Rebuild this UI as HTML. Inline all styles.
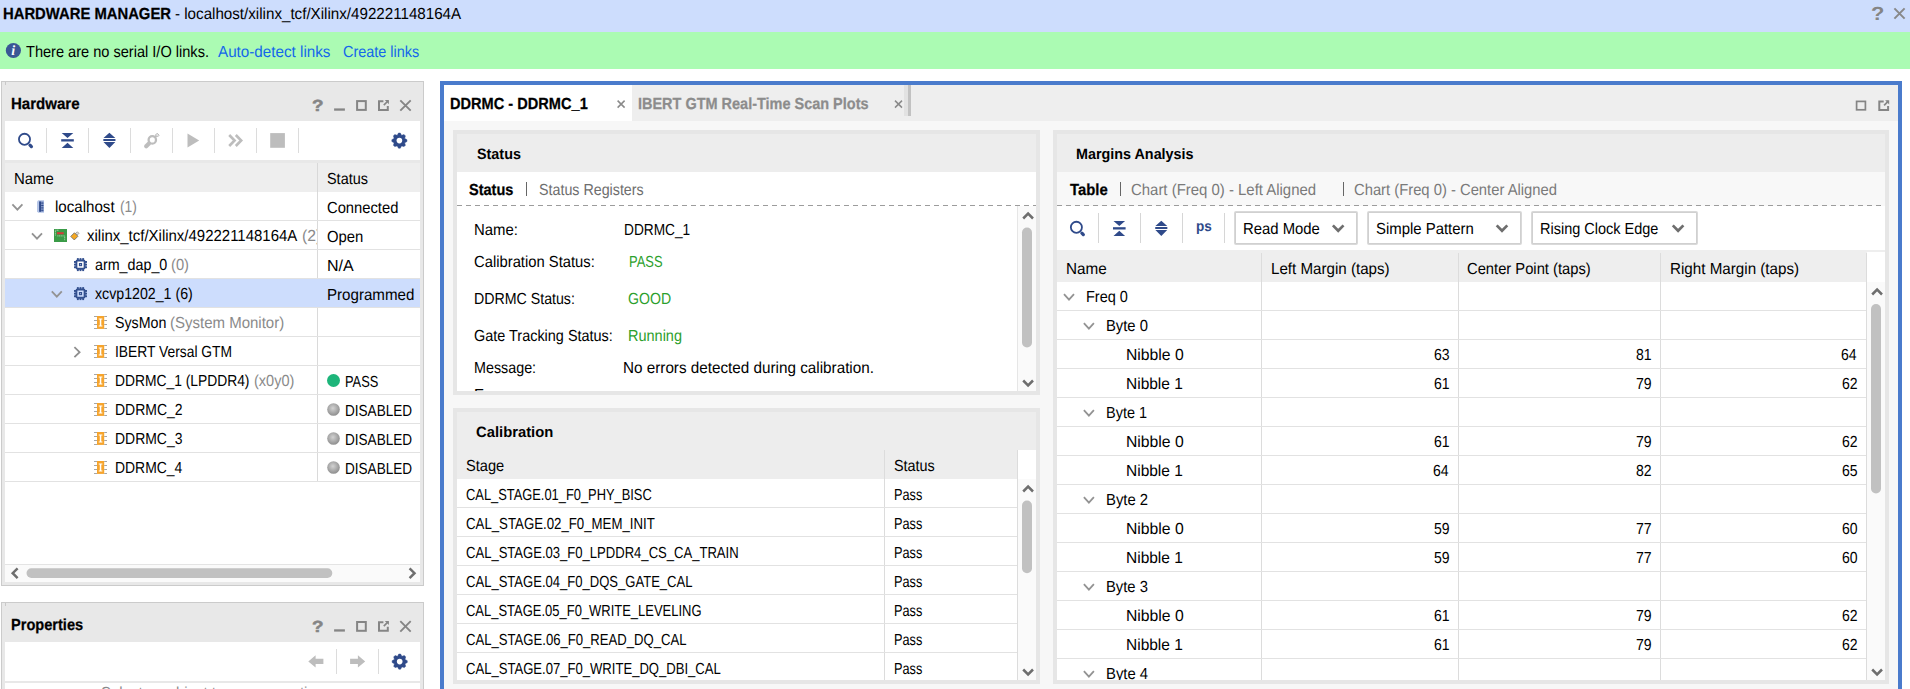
<!DOCTYPE html>
<html lang="en"><head><meta charset="utf-8"><title>Hardware Manager</title>
<style>
html,body{margin:0;padding:0;background:#fff;overflow:hidden}
#app{position:relative;width:1910px;height:689px;overflow:hidden;background:#fff;font-family:"Liberation Sans",sans-serif}
#app div{position:absolute}
#app span{position:absolute;white-space:pre;line-height:1;transform-origin:0 0;text-rendering:geometricPrecision}
#app svg{position:absolute;left:0;top:0}
</style></head><body><div id="app">
<div style="left:0px;top:0px;width:1910px;height:32px;background:#cdddfd;"></div>
<div style="left:0px;top:32px;width:1910px;height:37px;background:#abfbb3;"></div>
<div style="left:1px;top:81px;width:423px;height:505px;background:#cbcbcb;"></div>
<div style="left:2px;top:82px;width:421px;height:503px;background:#e8e8e8;"></div>
<div style="left:5px;top:121px;width:415px;height:39px;background:#fff;"></div>
<div style="left:5px;top:82px;width:1px;height:3px;background:#c9c9c9;"></div>
<div style="left:46px;top:128px;width:1px;height:25px;background:#dcdcdc;"></div>
<div style="left:88px;top:128px;width:1px;height:25px;background:#dcdcdc;"></div>
<div style="left:130px;top:128px;width:1px;height:25px;background:#dcdcdc;"></div>
<div style="left:172px;top:128px;width:1px;height:25px;background:#dcdcdc;"></div>
<div style="left:214px;top:128px;width:1px;height:25px;background:#dcdcdc;"></div>
<div style="left:256px;top:128px;width:1px;height:25px;background:#dcdcdc;"></div>
<div style="left:298px;top:128px;width:1px;height:25px;background:#dcdcdc;"></div>
<div style="left:5px;top:163px;width:415px;height:29px;background:#eeeeee;"></div>
<div style="left:5px;top:192px;width:415px;height:372px;background:#fff;"></div>
<div style="left:317px;top:163px;width:1px;height:319px;background:#dadada;"></div>
<div style="left:5px;top:279px;width:415px;height:29px;background:#cdddfd;"></div>
<div style="left:5px;top:220px;width:415px;height:1px;background:#e2e2e2;"></div>
<div style="left:5px;top:249px;width:415px;height:1px;background:#e2e2e2;"></div>
<div style="left:5px;top:278px;width:415px;height:1px;background:#e2e2e2;"></div>
<div style="left:5px;top:307px;width:415px;height:1px;background:#e2e2e2;"></div>
<div style="left:5px;top:336px;width:415px;height:1px;background:#e2e2e2;"></div>
<div style="left:5px;top:365px;width:415px;height:1px;background:#e2e2e2;"></div>
<div style="left:5px;top:394px;width:415px;height:1px;background:#e2e2e2;"></div>
<div style="left:5px;top:423px;width:415px;height:1px;background:#e2e2e2;"></div>
<div style="left:5px;top:452px;width:415px;height:1px;background:#e2e2e2;"></div>
<div style="left:5px;top:481px;width:415px;height:1px;background:#e2e2e2;"></div>
<div style="left:317px;top:163px;width:1px;height:29px;background:#d8d8d8;"></div>
<div style="left:318px;top:221px;width:102px;height:28px;background:#fff;"></div>
<div style="left:5px;top:564px;width:415px;height:18px;background:#fafafa;"></div>
<div style="left:5px;top:564px;width:415px;height:1px;background:#e4e4e4;"></div>
<div style="left:1px;top:602px;width:423px;height:90px;background:#cbcbcb;"></div>
<div style="left:2px;top:603px;width:421px;height:90px;background:#e8e8e8;"></div>
<div style="left:5px;top:642px;width:415px;height:39px;background:#fff;"></div>
<div style="left:5px;top:683px;width:415px;height:10px;background:#fff;"></div>
<div style="left:5px;top:603px;width:1px;height:3px;background:#c9c9c9;"></div>
<div style="left:336px;top:649px;width:1px;height:25px;background:#dcdcdc;"></div>
<div style="left:378px;top:649px;width:1px;height:25px;background:#dcdcdc;"></div>
<div style="left:440px;top:81px;width:1462px;height:620px;background:#4a7bcc;"></div>
<div style="left:444px;top:85px;width:1454px;height:620px;background:#f7f7f7;"></div>
<div style="left:444px;top:85px;width:1454px;height:36px;background:#eeeeee;"></div>
<div style="left:444px;top:85px;width:188px;height:36px;background:#fff;"></div>
<div style="left:904px;top:85px;width:4px;height:31px;background:#e2e2e2;"></div>
<div style="left:908px;top:85px;width:3px;height:31px;background:#c2c2c2;"></div>
<div style="left:453px;top:130px;width:587px;height:265px;background:#e6e6e6;"></div>
<div style="left:457px;top:134px;width:579px;height:257px;background:#ededed;"></div>
<div style="left:457px;top:172px;width:579px;height:219px;background:#fff;"></div>
<div style="left:526px;top:182px;width:1px;height:14px;background:#666;"></div>
<div style="left:457px;top:391px;width:579px;height:4px;background:#e6e6e6;"></div>
<div style="left:444px;top:395px;width:600px;height:13px;background:#f7f7f7;"></div>
<div style="left:1017px;top:206px;width:1px;height:185px;background:#e6e6e6;"></div>
<div style="left:1018px;top:206px;width:18px;height:185px;background:#fafafa;"></div>
<div style="left:453px;top:408px;width:587px;height:276px;background:#e6e6e6;"></div>
<div style="left:457px;top:412px;width:579px;height:268px;background:#ededed;"></div>
<div style="left:457px;top:479px;width:561px;height:201px;background:#fff;"></div>
<div style="left:1018px;top:450px;width:18px;height:230px;background:#fff;"></div>
<div style="left:884px;top:450px;width:1px;height:230px;background:#dcdcdc;"></div>
<div style="left:1017px;top:450px;width:1px;height:230px;background:#dcdcdc;"></div>
<div style="left:457px;top:507px;width:560px;height:1px;background:#e2e2e2;"></div>
<div style="left:457px;top:536px;width:560px;height:1px;background:#e2e2e2;"></div>
<div style="left:457px;top:565px;width:560px;height:1px;background:#e2e2e2;"></div>
<div style="left:457px;top:594px;width:560px;height:1px;background:#e2e2e2;"></div>
<div style="left:457px;top:623px;width:560px;height:1px;background:#e2e2e2;"></div>
<div style="left:457px;top:652px;width:560px;height:1px;background:#e2e2e2;"></div>
<div style="left:1018px;top:479px;width:18px;height:201px;background:#fafafa;"></div>
<div style="left:1053px;top:130px;width:836px;height:554px;background:#e6e6e6;"></div>
<div style="left:1057px;top:134px;width:828px;height:546px;background:#ededed;"></div>
<div style="left:1057px;top:172px;width:828px;height:34px;background:#f8f8f8;"></div>
<div style="left:1057px;top:206px;width:828px;height:44px;background:#fff;"></div>
<div style="left:1057px;top:250px;width:828px;height:32px;background:#eeeeee;"></div>
<div style="left:1057px;top:282px;width:828px;height:398px;background:#fff;"></div>
<div style="left:1867px;top:252px;width:18px;height:30px;background:#fff;"></div>
<div style="left:1120px;top:182px;width:1px;height:14px;background:#666;"></div>
<div style="left:1343px;top:182px;width:1px;height:14px;background:#666;"></div>
<div style="left:1098px;top:213px;width:1px;height:30px;background:#d6d6d6;"></div>
<div style="left:1140px;top:213px;width:1px;height:30px;background:#d6d6d6;"></div>
<div style="left:1182px;top:213px;width:1px;height:30px;background:#d6d6d6;"></div>
<div style="left:1224px;top:213px;width:1px;height:30px;background:#d6d6d6;"></div>
<div style="left:1234px;top:211px;width:124px;height:34px;background:#d9d9d9;border-radius:2px"></div>
<div style="left:1235px;top:212px;width:122px;height:32px;background:#d0d0d0;border-radius:1px"></div>
<div style="left:1236px;top:213px;width:120px;height:30px;background:#fff;"></div>
<div style="left:1367px;top:211px;width:155px;height:34px;background:#d9d9d9;border-radius:2px"></div>
<div style="left:1368px;top:212px;width:153px;height:32px;background:#d0d0d0;border-radius:1px"></div>
<div style="left:1369px;top:213px;width:151px;height:30px;background:#fff;"></div>
<div style="left:1531px;top:211px;width:167px;height:34px;background:#d9d9d9;border-radius:2px"></div>
<div style="left:1532px;top:212px;width:165px;height:32px;background:#d0d0d0;border-radius:1px"></div>
<div style="left:1533px;top:213px;width:163px;height:30px;background:#fff;"></div>
<div style="left:1261px;top:253px;width:1px;height:427px;background:#dcdcdc;"></div>
<div style="left:1458px;top:253px;width:1px;height:427px;background:#dcdcdc;"></div>
<div style="left:1660px;top:253px;width:1px;height:427px;background:#dcdcdc;"></div>
<div style="left:1866px;top:253px;width:1px;height:427px;background:#dcdcdc;"></div>
<div style="left:1057px;top:310px;width:809px;height:1px;background:#e2e2e2;"></div>
<div style="left:1057px;top:339px;width:809px;height:1px;background:#e2e2e2;"></div>
<div style="left:1057px;top:368px;width:809px;height:1px;background:#e2e2e2;"></div>
<div style="left:1057px;top:397px;width:809px;height:1px;background:#e2e2e2;"></div>
<div style="left:1057px;top:426px;width:809px;height:1px;background:#e2e2e2;"></div>
<div style="left:1057px;top:455px;width:809px;height:1px;background:#e2e2e2;"></div>
<div style="left:1057px;top:484px;width:809px;height:1px;background:#e2e2e2;"></div>
<div style="left:1057px;top:513px;width:809px;height:1px;background:#e2e2e2;"></div>
<div style="left:1057px;top:542px;width:809px;height:1px;background:#e2e2e2;"></div>
<div style="left:1057px;top:571px;width:809px;height:1px;background:#e2e2e2;"></div>
<div style="left:1057px;top:600px;width:809px;height:1px;background:#e2e2e2;"></div>
<div style="left:1057px;top:629px;width:809px;height:1px;background:#e2e2e2;"></div>
<div style="left:1057px;top:658px;width:809px;height:1px;background:#e2e2e2;"></div>
<div style="left:1057px;top:680px;width:828px;height:4px;background:#e6e6e6;"></div>
<div style="left:444px;top:684px;width:1454px;height:10px;background:#f7f7f7;"></div>
<div style="left:1867px;top:282px;width:18px;height:398px;background:#fafafa;"></div>
<svg width="1910" height="689" viewBox="0 0 1910 689"><circle cx="13.4" cy="50.5" r="7.6" fill="#3a5795"/>
<path d="M1894.4 8.4 L1904.6 18.6 M1904.6 8.4 L1894.4 18.6" stroke="#888888" stroke-width="2" fill="none"/>
<rect x="334.1" y="108.39999999999999" width="10.8" height="2.3" fill="#858585"/>
<rect x="357.1" y="101.1" width="8.7" height="8.8" fill="none" stroke="#858585" stroke-width="2"/>
<path d="M383.4 101.3 H379 V109.89999999999999 H387.8 V105.89999999999999" fill="none" stroke="#858585" stroke-width="2"/>
<path d="M383.8 105.2 L388 101.0" stroke="#858585" stroke-width="1.7" fill="none"/><path d="M384.8 100.1 H388.9 V104.2 Z" fill="#858585"/>
<path d="M400.3 100.3 L410.7 110.7 M410.7 100.3 L400.3 110.7" stroke="#858585" stroke-width="1.9" fill="none"/>
<circle cx="24.5" cy="139.3" r="5.55" fill="none" stroke="#2f4a8a" stroke-width="1.8"/><path d="M30.0 145.20000000000002 L31.4 146.60000000000002" stroke="#2f4a8a" stroke-width="3.3" stroke-linecap="round"/>
<path d="M61.7 133.0 H73.3 L67.5 138.1 Z M61.7 147.9 H73.3 L67.5 142.70000000000002 Z" fill="#2f4a8a"/><rect x="61.2" y="139.20000000000002" width="12.6" height="2.3" fill="#2f4a8a"/>
<path d="M103.5 138.0 H115.30000000000001 L109.4 132.85 Z M103.5 142.0 H115.30000000000001 L109.4 148.0 Z" fill="#2f4a8a"/><rect x="103.30000000000001" y="139.0" width="12.2" height="2" rx="0.5" fill="#2f4a8a"/>
<g fill="none" stroke="#bdbdbd"><circle cx="152.3" cy="139.9" r="3.7" stroke-width="2.3"/><path d="M146.2 146.2 L149 143.4" stroke-width="4.2" stroke-linecap="round"/><path d="M155 137.2 L156.6 135.6" stroke-width="2"/><path d="M157.2 133.2 L159.2 135.2 L157.4 137 L155.4 135 Z" stroke-width="1" fill="#e2e2e2"/></g>
<path d="M187.5 133.5 L199.2 140.5 L187.5 147.5 Z" fill="#bdbdbd"/>
<path d="M229.2 135 L234.6 140.5 L229.2 146 M235.8 135 L241.2 140.5 L235.8 146" fill="none" stroke="#bdbdbd" stroke-width="2.6"/>
<rect x="270.2" y="133.1" width="14.7" height="14.7" fill="#bdbdbd"/>
<path d="M397.31 135.21 L398.49 133.05 L400.31 133.05 L401.49 135.21 L401.73 135.32 L404.09 134.62 L405.38 135.91 L404.68 138.27 L404.79 138.51 L406.95 139.69 L406.95 141.51 L404.79 142.69 L404.68 142.93 L405.38 145.29 L404.09 146.58 L401.73 145.88 L401.49 145.99 L400.31 148.15 L398.49 148.15 L397.31 145.99 L397.07 145.88 L394.71 146.58 L393.42 145.29 L394.12 142.93 L394.01 142.69 L391.85 141.51 L391.85 139.69 L394.01 138.51 L394.12 138.27 L393.42 135.91 L394.71 134.62 L397.07 135.32Z" fill="#2f4a8a" stroke="#2f4a8a" stroke-width="0.5" stroke-linejoin="round"/><circle cx="399.4" cy="140.6" r="2.81" fill="#fff"/>
<path d="M12.4 204.3 L17.4 209.70000000000002 L22.4 204.3" fill="none" stroke="#939393" stroke-width="1.8"/>
<path d="M38.2 200.3 H44 V212.8 H38.2 L37 211.6 V201.5 Z" fill="#b5c5e7"/><rect x="39.1" y="201.4" width="2.1" height="10.4" fill="#2f4a8a"/><rect x="41.2" y="201.4" width="2.3" height="10.4" fill="#7c91c2"/><rect x="41.2" y="202.6" width="2.2" height="1" fill="#2f4a8a"/><rect x="41.2" y="205" width="2.2" height="1" fill="#2f4a8a"/><rect x="41.2" y="207.4" width="2.2" height="1" fill="#2f4a8a"/><rect x="41.2" y="209.8" width="2.2" height="1" fill="#2f4a8a"/>
<path d="M32 233.3 L37.0 238.70000000000002 L42 233.3" fill="none" stroke="#939393" stroke-width="1.8"/>
<rect x="54" y="229" width="13" height="13" fill="#3a9b47"/><rect x="56.9" y="232.2" width="6.8" height="2.1" fill="#d63a3a"/><path d="M55.4 235.6 V230.2 H59 M57.3 235.9 H64.7 V240.6" stroke="#a5d6aa" stroke-width="0.9" fill="none" stroke-dasharray="1.2 0.5"/>
<g transform="rotate(45 74.5 236.2)"><rect x="73.4" y="231" width="2.2" height="3" fill="#dcdcdc" stroke="#7a7a7a" stroke-width="0.6"/><rect x="72" y="233.8" width="5" height="5.2" fill="#f6a821" stroke="#6b6b6b" stroke-width="0.8"/></g>
<rect x="76.4" y="260.5" width="8.2" height="8.2" rx="1.2" fill="none" stroke="#33508f" stroke-width="1.9"/><rect x="78.9" y="263.0" width="3.2" height="3.2" fill="#33508f"/><rect x="80" y="264.1" width="1" height="1" fill="#9fb0d6"/><rect x="76.9" y="258.1" width="1.9" height="2" fill="#33508f"/><rect x="76.9" y="269.1" width="1.9" height="2" fill="#33508f"/><rect x="74" y="261.0" width="2" height="1.9" fill="#33508f"/><rect x="85" y="261.0" width="2" height="1.9" fill="#33508f"/><rect x="79.55" y="258.1" width="1.9" height="2" fill="#33508f"/><rect x="79.55" y="269.1" width="1.9" height="2" fill="#33508f"/><rect x="74" y="263.65000000000003" width="2" height="1.9" fill="#33508f"/><rect x="85" y="263.65000000000003" width="2" height="1.9" fill="#33508f"/><rect x="82.2" y="258.1" width="1.9" height="2" fill="#33508f"/><rect x="82.2" y="269.1" width="1.9" height="2" fill="#33508f"/><rect x="74" y="266.3" width="2" height="1.9" fill="#33508f"/><rect x="85" y="266.3" width="2" height="1.9" fill="#33508f"/>
<path d="M51.8 291.3 L56.8 296.7 L61.8 291.3" fill="none" stroke="#939393" stroke-width="1.8"/>
<rect x="76.4" y="289.5" width="8.2" height="8.2" rx="1.2" fill="none" stroke="#33508f" stroke-width="1.9"/><rect x="78.9" y="292.0" width="3.2" height="3.2" fill="#33508f"/><rect x="80" y="293.1" width="1" height="1" fill="#9fb0d6"/><rect x="76.9" y="287.1" width="1.9" height="2" fill="#33508f"/><rect x="76.9" y="298.1" width="1.9" height="2" fill="#33508f"/><rect x="74" y="290.0" width="2" height="1.9" fill="#33508f"/><rect x="85" y="290.0" width="2" height="1.9" fill="#33508f"/><rect x="79.55" y="287.1" width="1.9" height="2" fill="#33508f"/><rect x="79.55" y="298.1" width="1.9" height="2" fill="#33508f"/><rect x="74" y="292.65000000000003" width="2" height="1.9" fill="#33508f"/><rect x="85" y="292.65000000000003" width="2" height="1.9" fill="#33508f"/><rect x="82.2" y="287.1" width="1.9" height="2" fill="#33508f"/><rect x="82.2" y="298.1" width="1.9" height="2" fill="#33508f"/><rect x="74" y="295.3" width="2" height="1.9" fill="#33508f"/><rect x="85" y="295.3" width="2" height="1.9" fill="#33508f"/>
<rect x="97" y="316" width="7.2" height="12.9" fill="#f6a42c"/><rect x="94" y="316.1" width="3" height="0.9" fill="#9c9c9c"/><rect x="104.2" y="316.1" width="2.8" height="0.9" fill="#9c9c9c"/><rect x="94" y="320.0" width="3" height="0.9" fill="#9c9c9c"/><rect x="104.2" y="320.0" width="2.8" height="0.9" fill="#9c9c9c"/><rect x="94" y="324.0" width="3" height="0.9" fill="#9c9c9c"/><rect x="104.2" y="324.0" width="2.8" height="0.9" fill="#9c9c9c"/><rect x="94" y="328.0" width="3" height="0.9" fill="#9c9c9c"/><rect x="104.2" y="328.0" width="2.8" height="0.9" fill="#9c9c9c"/><path d="M98.7 318.4 H102.4 V319.5 H101.3 V325.4 H102.4 V326.5 H98.7 V325.4 H99.8 V319.5 H98.7 Z" fill="#fff"/>
<path d="M74.4 347.2 L79.60000000000001 352.2 L74.4 357.2" fill="none" stroke="#8e8e8e" stroke-width="1.8"/>
<rect x="97" y="345" width="7.2" height="12.9" fill="#f6a42c"/><rect x="94" y="345.1" width="3" height="0.9" fill="#9c9c9c"/><rect x="104.2" y="345.1" width="2.8" height="0.9" fill="#9c9c9c"/><rect x="94" y="349.0" width="3" height="0.9" fill="#9c9c9c"/><rect x="104.2" y="349.0" width="2.8" height="0.9" fill="#9c9c9c"/><rect x="94" y="353.0" width="3" height="0.9" fill="#9c9c9c"/><rect x="104.2" y="353.0" width="2.8" height="0.9" fill="#9c9c9c"/><rect x="94" y="357.0" width="3" height="0.9" fill="#9c9c9c"/><rect x="104.2" y="357.0" width="2.8" height="0.9" fill="#9c9c9c"/><path d="M98.7 347.4 H102.4 V348.5 H101.3 V354.4 H102.4 V355.5 H98.7 V354.4 H99.8 V348.5 H98.7 Z" fill="#fff"/>
<rect x="97" y="374" width="7.2" height="12.9" fill="#f6a42c"/><rect x="94" y="374.1" width="3" height="0.9" fill="#9c9c9c"/><rect x="104.2" y="374.1" width="2.8" height="0.9" fill="#9c9c9c"/><rect x="94" y="378.0" width="3" height="0.9" fill="#9c9c9c"/><rect x="104.2" y="378.0" width="2.8" height="0.9" fill="#9c9c9c"/><rect x="94" y="382.0" width="3" height="0.9" fill="#9c9c9c"/><rect x="104.2" y="382.0" width="2.8" height="0.9" fill="#9c9c9c"/><rect x="94" y="386.0" width="3" height="0.9" fill="#9c9c9c"/><rect x="104.2" y="386.0" width="2.8" height="0.9" fill="#9c9c9c"/><path d="M98.7 376.4 H102.4 V377.5 H101.3 V383.4 H102.4 V384.5 H98.7 V383.4 H99.8 V377.5 H98.7 Z" fill="#fff"/>
<rect x="97" y="403" width="7.2" height="12.9" fill="#f6a42c"/><rect x="94" y="403.1" width="3" height="0.9" fill="#9c9c9c"/><rect x="104.2" y="403.1" width="2.8" height="0.9" fill="#9c9c9c"/><rect x="94" y="407.0" width="3" height="0.9" fill="#9c9c9c"/><rect x="104.2" y="407.0" width="2.8" height="0.9" fill="#9c9c9c"/><rect x="94" y="411.0" width="3" height="0.9" fill="#9c9c9c"/><rect x="104.2" y="411.0" width="2.8" height="0.9" fill="#9c9c9c"/><rect x="94" y="415.0" width="3" height="0.9" fill="#9c9c9c"/><rect x="104.2" y="415.0" width="2.8" height="0.9" fill="#9c9c9c"/><path d="M98.7 405.4 H102.4 V406.5 H101.3 V412.4 H102.4 V413.5 H98.7 V412.4 H99.8 V406.5 H98.7 Z" fill="#fff"/>
<rect x="97" y="432" width="7.2" height="12.9" fill="#f6a42c"/><rect x="94" y="432.1" width="3" height="0.9" fill="#9c9c9c"/><rect x="104.2" y="432.1" width="2.8" height="0.9" fill="#9c9c9c"/><rect x="94" y="436.0" width="3" height="0.9" fill="#9c9c9c"/><rect x="104.2" y="436.0" width="2.8" height="0.9" fill="#9c9c9c"/><rect x="94" y="440.0" width="3" height="0.9" fill="#9c9c9c"/><rect x="104.2" y="440.0" width="2.8" height="0.9" fill="#9c9c9c"/><rect x="94" y="444.0" width="3" height="0.9" fill="#9c9c9c"/><rect x="104.2" y="444.0" width="2.8" height="0.9" fill="#9c9c9c"/><path d="M98.7 434.4 H102.4 V435.5 H101.3 V441.4 H102.4 V442.5 H98.7 V441.4 H99.8 V435.5 H98.7 Z" fill="#fff"/>
<rect x="97" y="461" width="7.2" height="12.9" fill="#f6a42c"/><rect x="94" y="461.1" width="3" height="0.9" fill="#9c9c9c"/><rect x="104.2" y="461.1" width="2.8" height="0.9" fill="#9c9c9c"/><rect x="94" y="465.0" width="3" height="0.9" fill="#9c9c9c"/><rect x="104.2" y="465.0" width="2.8" height="0.9" fill="#9c9c9c"/><rect x="94" y="469.0" width="3" height="0.9" fill="#9c9c9c"/><rect x="104.2" y="469.0" width="2.8" height="0.9" fill="#9c9c9c"/><rect x="94" y="473.0" width="3" height="0.9" fill="#9c9c9c"/><rect x="104.2" y="473.0" width="2.8" height="0.9" fill="#9c9c9c"/><path d="M98.7 463.4 H102.4 V464.5 H101.3 V470.4 H102.4 V471.5 H98.7 V470.4 H99.8 V464.5 H98.7 Z" fill="#fff"/>
<circle cx="333.5" cy="380.5" r="6.5" fill="#1db57a"/>
<defs><radialGradient id="gg" cx="45%" cy="40%" r="60%"><stop offset="0" stop-color="#d2d2d2"/><stop offset="1" stop-color="#8e8e8e"/></radialGradient></defs>
<circle cx="333.5" cy="409.5" r="6.3" fill="url(#gg)"/>
<circle cx="333.5" cy="438.5" r="6.3" fill="url(#gg)"/>
<circle cx="333.5" cy="467.5" r="6.3" fill="url(#gg)"/>
<rect x="26.5" y="568.2" width="305.8" height="9.8" rx="4.9" fill="#c1c1c1"/>
<path d="M17.6 568.3 L12.7 573.2 L17.6 578.1" fill="none" stroke="#6e6e6e" stroke-width="2.5"/><path d="M409.6 568.3 L414.5 573.2 L409.6 578.1" fill="none" stroke="#6e6e6e" stroke-width="2.5"/>
<rect x="334.1" y="629.3000000000001" width="10.8" height="2.3" fill="#858585"/>
<rect x="357.1" y="622.0" width="8.7" height="8.8" fill="none" stroke="#858585" stroke-width="2"/>
<path d="M383.4 622.2 H379 V630.8000000000001 H387.8 V626.8000000000001" fill="none" stroke="#858585" stroke-width="2"/>
<path d="M383.8 626.1 L388 621.9000000000001" stroke="#858585" stroke-width="1.7" fill="none"/><path d="M384.8 621.0 H388.9 V625.1 Z" fill="#858585"/>
<path d="M400.3 621.2 L410.7 631.6 M410.7 621.2 L400.3 631.6" stroke="#858585" stroke-width="1.9" fill="none"/>
<path d="M308.3 661.4 L315.6 655.2 V658.7 H323.4 V664.1 H315.6 V667.6 Z" fill="#bdbdbd"/>
<path d="M365.2 661.4 L357.9 655.2 V658.7 H350.1 V664.1 H357.9 V667.6 Z" fill="#bdbdbd"/>
<path d="M397.61 656.21 L398.79 654.05 L400.61 654.05 L401.79 656.21 L402.03 656.32 L404.39 655.62 L405.68 656.91 L404.98 659.27 L405.09 659.51 L407.25 660.69 L407.25 662.51 L405.09 663.69 L404.98 663.93 L405.68 666.29 L404.39 667.58 L402.03 666.88 L401.79 666.99 L400.61 669.15 L398.79 669.15 L397.61 666.99 L397.37 666.88 L395.01 667.58 L393.72 666.29 L394.42 663.93 L394.31 663.69 L392.15 662.51 L392.15 660.69 L394.31 659.51 L394.42 659.27 L393.72 656.91 L395.01 655.62 L397.37 656.32Z" fill="#2f4a8a" stroke="#2f4a8a" stroke-width="0.5" stroke-linejoin="round"/><circle cx="399.7" cy="661.6" r="2.81" fill="#fff"/>
<path d="M617.6 100.6 L624.6 107.6 M624.6 100.6 L617.6 107.6" stroke="#8a8a8a" stroke-width="1.5" fill="none"/>
<path d="M895 100.6 L902 107.6 M902 100.6 L895 107.6" stroke="#8a8a8a" stroke-width="1.5" fill="none"/>
<rect x="1856.6" y="101.4" width="8.8" height="8.4" fill="none" stroke="#858585" stroke-width="1.7"/>
<path d="M1883.7 101.5 H1879.3 V110.1 H1888.1 V106.1" fill="none" stroke="#858585" stroke-width="2"/>
<path d="M1884.1 105.4 L1888.3 101.2" stroke="#858585" stroke-width="1.7" fill="none"/><path d="M1885.1 100.3 H1889.2 V104.4 Z" fill="#858585"/>
<path d="M457 205.5 H1036" stroke="#9c9c9c" stroke-width="1" stroke-dasharray="5 4" fill="none"/>
<rect x="1022" y="227.6" width="10" height="119.79999999999998" rx="5" fill="#c1c1c1"/>
<path d="M1023.1999999999999 218.5 L1028.1 213.6 L1033.0 218.5" fill="none" stroke="#6e6e6e" stroke-width="2.5"/>
<path d="M1023.1999999999999 380.5 L1028.1 385.4 L1033.0 380.5" fill="none" stroke="#6e6e6e" stroke-width="2.5"/>
<rect x="1022" y="500.6" width="10" height="72.60000000000002" rx="5" fill="#c1c1c1"/>
<path d="M1023.1999999999999 491.5 L1028.1 486.6 L1033.0 491.5" fill="none" stroke="#6e6e6e" stroke-width="2.5"/>
<path d="M1023.1999999999999 669.5 L1028.1 674.4 L1033.0 669.5" fill="none" stroke="#6e6e6e" stroke-width="2.5"/>
<path d="M1057 205.5 H1885" stroke="#9c9c9c" stroke-width="1" stroke-dasharray="5 4" fill="none"/>
<circle cx="1076.4" cy="227.3" r="5.55" fill="none" stroke="#2f4a8a" stroke-width="1.8"/><path d="M1081.9 233.20000000000002 L1083.3000000000002 234.60000000000002" stroke="#2f4a8a" stroke-width="3.3" stroke-linecap="round"/>
<path d="M1113.5 221.0 H1125.1 L1119.3 226.1 Z M1113.5 235.9 H1125.1 L1119.3 230.70000000000002 Z" fill="#2f4a8a"/><rect x="1113.0" y="227.20000000000002" width="12.6" height="2.3" fill="#2f4a8a"/>
<path d="M1155.3999999999999 226.0 H1167.2 L1161.3 220.85 Z M1155.3999999999999 230.0 H1167.2 L1161.3 236.0 Z" fill="#2f4a8a"/><rect x="1155.2" y="227.0" width="12.2" height="2" rx="0.5" fill="#2f4a8a"/>
<path d="M1332.9 225.4 L1338.2 230.8 L1343.5 225.4" fill="none" stroke="#6e6e6e" stroke-width="2.7"/>
<path d="M1496.7 225.4 L1502.0 230.8 L1507.3 225.4" fill="none" stroke="#6e6e6e" stroke-width="2.7"/>
<path d="M1672.8000000000002 225.4 L1678.1000000000001 230.8 L1683.4 225.4" fill="none" stroke="#6e6e6e" stroke-width="2.7"/>
<path d="M1064 294.2 L1069.0 299.59999999999997 L1074 294.2" fill="none" stroke="#939393" stroke-width="1.8"/>
<path d="M1083.9 323.2 L1088.9 328.59999999999997 L1093.9 323.2" fill="none" stroke="#939393" stroke-width="1.8"/>
<path d="M1083.9 410.2 L1088.9 415.59999999999997 L1093.9 410.2" fill="none" stroke="#939393" stroke-width="1.8"/>
<path d="M1083.9 497.2 L1088.9 502.59999999999997 L1093.9 497.2" fill="none" stroke="#939393" stroke-width="1.8"/>
<path d="M1083.9 584.2 L1088.9 589.6 L1093.9 584.2" fill="none" stroke="#939393" stroke-width="1.8"/>
<path d="M1083.9 671.2 L1088.9 676.6 L1093.9 671.2" fill="none" stroke="#939393" stroke-width="1.8"/>
<rect x="1871" y="304" width="10" height="189.39999999999998" rx="5" fill="#c1c1c1"/>
<path d="M1872.1999999999998 294.5 L1877.1 289.6 L1882.0 294.5" fill="none" stroke="#6e6e6e" stroke-width="2.5"/>
<path d="M1872.1999999999998 669.5 L1877.1 674.4 L1882.0 669.5" fill="none" stroke="#6e6e6e" stroke-width="2.5"/></svg>
<span style="left:2.91px;top:7.00px;font-size:16px;color:#000;font-weight:700;transform:scaleX(0.9263);-webkit-text-stroke:0.25px #000;">HARDWARE MANAGER</span>
<span style="left:174.79px;top:7.00px;font-size:16px;color:#000;transform:scaleX(0.9472);">- localhost/xilinx_tcf/Xilinx/492221148164A</span>
<span style="left:25.91px;top:45.00px;font-size:16px;color:#000;transform:scaleX(0.9104);">There are no serial I/O links.</span>
<span style="left:217.70px;top:45.00px;font-size:16px;color:#1467ea;transform:scaleX(0.9508);">Auto-detect links</span>
<span style="left:342.68px;top:45.00px;font-size:16px;color:#1467ea;transform:scaleX(0.9027);">Create links</span>
<span style="left:11.32px;top:45.00px;font-size:14px;color:#fff;font-weight:700;font-family:'Liberation Serif',serif;font-style:italic;">i</span>
<span style="left:1871.02px;top:5.00px;font-size:19px;color:#858585;font-weight:700;transform:scaleX(1.1538);">?</span>
<span style="left:10.90px;top:97.00px;font-size:16px;color:#000;font-weight:700;transform:scaleX(0.9393);-webkit-text-stroke:0.25px #000;">Hardware</span>
<span style="left:311.95px;top:99.00px;font-size:16px;color:#858585;font-weight:700;transform:scaleX(1.1779);-webkit-text-stroke:0.5px #858585;">?</span>
<span style="left:14.21px;top:172.00px;font-size:16px;color:#000;transform:scaleX(0.9333);">Name</span>
<span style="left:326.82px;top:172.00px;font-size:16px;color:#000;transform:scaleX(0.9019);">Status</span>
<span style="left:55.39px;top:200.00px;font-size:16px;color:#000;transform:scaleX(0.9434);">localhost</span>
<span style="left:119.57px;top:200.00px;font-size:16px;color:#8a8a8a;transform:scaleX(0.8621);">(1)</span>
<span style="left:87.15px;top:229.00px;font-size:16px;color:#000;transform:scaleX(0.9358);">xilinx_tcf/Xilinx/492221148164A</span>
<div style="left:5px;top:221px;width:312px;height:28px;overflow:hidden"><span style="left:296.66px;top:8.00px;font-size:16px;color:#8a8a8a;transform:scaleX(0.9805);">(2)</span></div>
<span style="left:94.73px;top:258.00px;font-size:16px;color:#000;transform:scaleX(0.8930);">arm_dap_0</span>
<span style="left:171.12px;top:258.00px;font-size:16px;color:#8a8a8a;transform:scaleX(0.9185);">(0)</span>
<span style="left:95.16px;top:287.00px;font-size:16px;color:#000;transform:scaleX(0.8867);">xcvp1202_1 (6)</span>
<span style="left:114.83px;top:316.00px;font-size:16px;color:#000;transform:scaleX(0.8888);">SysMon</span>
<span style="left:170.00px;top:316.00px;font-size:16px;color:#8a8a8a;transform:scaleX(0.9376);">(System Monitor)</span>
<span style="left:114.96px;top:345.00px;font-size:16px;color:#000;transform:scaleX(0.8638);">IBERT Versal GTM</span>
<span style="left:115.09px;top:374.00px;font-size:16px;color:#000;transform:scaleX(0.8641);">DDRMC_1 (LPDDR4)</span>
<span style="left:253.83px;top:374.00px;font-size:16px;color:#8a8a8a;transform:scaleX(0.9075);">(x0y0)</span>
<span style="left:115.08px;top:403.00px;font-size:16px;color:#000;transform:scaleX(0.8735);">DDRMC_2</span>
<span style="left:115.08px;top:432.00px;font-size:16px;color:#000;transform:scaleX(0.8717);">DDRMC_3</span>
<span style="left:115.09px;top:461.00px;font-size:16px;color:#000;transform:scaleX(0.8698);">DDRMC_4</span>
<span style="left:326.66px;top:201.00px;font-size:16px;color:#000;transform:scaleX(0.9222);">Connected</span>
<span style="left:326.81px;top:230.00px;font-size:16px;color:#000;transform:scaleX(0.9281);">Open</span>
<span style="left:326.92px;top:259.00px;font-size:16px;color:#000;">N/A</span>
<span style="left:326.99px;top:288.00px;font-size:16px;color:#000;transform:scaleX(0.9446);">Programmed</span>
<span style="left:344.67px;top:375.00px;font-size:16px;color:#000;transform:scaleX(0.8025);">PASS</span>
<span style="left:344.62px;top:404.00px;font-size:16px;color:#000;transform:scaleX(0.8473);">DISABLED</span>
<span style="left:344.62px;top:433.00px;font-size:16px;color:#000;transform:scaleX(0.8473);">DISABLED</span>
<span style="left:344.62px;top:462.00px;font-size:16px;color:#000;transform:scaleX(0.8473);">DISABLED</span>
<span style="left:10.93px;top:618.00px;font-size:16px;color:#000;font-weight:700;transform:scaleX(0.9111);-webkit-text-stroke:0.25px #000;">Properties</span>
<span style="left:311.95px;top:620.00px;font-size:16px;color:#858585;font-weight:700;transform:scaleX(1.1779);-webkit-text-stroke:0.5px #858585;">?</span>
<span style="left:100.80px;top:686.00px;font-size:16px;color:#8a8a8a;transform:scaleX(0.9359);">Select an object to see properties</span>
<span style="left:450.02px;top:97.00px;font-size:16px;color:#000;font-weight:700;transform:scaleX(0.9116);-webkit-text-stroke:0.25px #000;">DDRMC - DDRMC_1</span>
<span style="left:637.73px;top:97.00px;font-size:16px;color:#8c8c8c;font-weight:700;transform:scaleX(0.9044);-webkit-text-stroke:0.25px #8c8c8c;">IBERT GTM Real-Time Scan Plots</span>
<span style="left:477.01px;top:147.00px;font-size:15px;color:#000;font-weight:700;transform:scaleX(0.9578);">Status</span>
<span style="left:469.01px;top:183.00px;font-size:16px;color:#000;font-weight:700;transform:scaleX(0.9062);-webkit-text-stroke:0.25px #000;">Status</span>
<span style="left:538.73px;top:183.00px;font-size:16px;color:#6e6e6e;transform:scaleX(0.8919);">Status Registers</span>
<span style="left:474.11px;top:223.00px;font-size:16px;color:#000;transform:scaleX(0.9316);">Name:</span>
<span style="left:623.50px;top:223.00px;font-size:16px;color:#000;transform:scaleX(0.8563);">DDRMC_1</span>
<span style="left:473.76px;top:255.00px;font-size:16px;color:#000;transform:scaleX(0.9243);">Calibration Status:</span>
<span style="left:628.77px;top:255.00px;font-size:16px;color:#2ca02c;transform:scaleX(0.8075);">PASS</span>
<span style="left:474.17px;top:292.00px;font-size:16px;color:#000;transform:scaleX(0.8865);">DDRMC Status:</span>
<span style="left:627.79px;top:292.00px;font-size:16px;color:#2ca02c;transform:scaleX(0.8816);">GOOD</span>
<span style="left:473.78px;top:329.00px;font-size:16px;color:#000;transform:scaleX(0.9024);">Gate Tracking Status:</span>
<span style="left:628.14px;top:329.00px;font-size:16px;color:#2ca02c;transform:scaleX(0.9056);">Running</span>
<span style="left:474.15px;top:361.00px;font-size:16px;color:#000;transform:scaleX(0.8953);">Message:</span>
<span style="left:623.38px;top:361.00px;font-size:16px;color:#000;transform:scaleX(0.9533);">No errors detected during calibration.</span>
<div style="left:457px;top:206px;width:561px;height:185px;overflow:hidden"><span style="left:17.08px;top:182.00px;font-size:16px;color:#000;transform:scaleX(0.9496);">Error:</span></div>
<span style="left:476.01px;top:425.00px;font-size:15px;color:#000;font-weight:700;transform:scaleX(0.9866);">Calibration</span>
<span style="left:465.92px;top:459.00px;font-size:16px;color:#000;transform:scaleX(0.9139);">Stage</span>
<span style="left:893.82px;top:459.00px;font-size:16px;color:#000;transform:scaleX(0.8997);">Status</span>
<div style="left:457px;top:479px;width:561px;height:201px;overflow:hidden"><span style="left:8.66px;top:9.00px;font-size:16px;color:#000;transform:scaleX(0.8044);">CAL_STAGE.01_F0_PHY_BISC</span></div>
<div style="left:885px;top:479px;width:133px;height:201px;overflow:hidden"><span style="left:9.18px;top:9.00px;font-size:16px;color:#000;transform:scaleX(0.7956);">Pass</span></div>
<div style="left:457px;top:479px;width:561px;height:201px;overflow:hidden"><span style="left:8.64px;top:38.00px;font-size:16px;color:#000;transform:scaleX(0.8274);">CAL_STAGE.02_F0_MEM_INIT</span></div>
<div style="left:885px;top:479px;width:133px;height:201px;overflow:hidden"><span style="left:9.18px;top:38.00px;font-size:16px;color:#000;transform:scaleX(0.7956);">Pass</span></div>
<div style="left:457px;top:479px;width:561px;height:201px;overflow:hidden"><span style="left:8.65px;top:67.00px;font-size:16px;color:#000;transform:scaleX(0.8160);">CAL_STAGE.03_F0_LPDDR4_CS_CA_TRAIN</span></div>
<div style="left:885px;top:479px;width:133px;height:201px;overflow:hidden"><span style="left:9.18px;top:67.00px;font-size:16px;color:#000;transform:scaleX(0.7956);">Pass</span></div>
<div style="left:457px;top:479px;width:561px;height:201px;overflow:hidden"><span style="left:8.65px;top:96.00px;font-size:16px;color:#000;transform:scaleX(0.8155);">CAL_STAGE.04_F0_DQS_GATE_CAL</span></div>
<div style="left:885px;top:479px;width:133px;height:201px;overflow:hidden"><span style="left:9.18px;top:96.00px;font-size:16px;color:#000;transform:scaleX(0.7956);">Pass</span></div>
<div style="left:457px;top:479px;width:561px;height:201px;overflow:hidden"><span style="left:8.65px;top:125.00px;font-size:16px;color:#000;transform:scaleX(0.8108);">CAL_STAGE.05_F0_WRITE_LEVELING</span></div>
<div style="left:885px;top:479px;width:133px;height:201px;overflow:hidden"><span style="left:9.18px;top:125.00px;font-size:16px;color:#000;transform:scaleX(0.7956);">Pass</span></div>
<div style="left:457px;top:479px;width:561px;height:201px;overflow:hidden"><span style="left:8.64px;top:154.00px;font-size:16px;color:#000;transform:scaleX(0.8192);">CAL_STAGE.06_F0_READ_DQ_CAL</span></div>
<div style="left:885px;top:479px;width:133px;height:201px;overflow:hidden"><span style="left:9.18px;top:154.00px;font-size:16px;color:#000;transform:scaleX(0.7956);">Pass</span></div>
<div style="left:457px;top:479px;width:561px;height:201px;overflow:hidden"><span style="left:8.65px;top:183.00px;font-size:16px;color:#000;transform:scaleX(0.8171);">CAL_STAGE.07_F0_WRITE_DQ_DBI_CAL</span></div>
<div style="left:885px;top:479px;width:133px;height:201px;overflow:hidden"><span style="left:9.18px;top:183.00px;font-size:16px;color:#000;transform:scaleX(0.7956);">Pass</span></div>
<span style="left:1075.84px;top:147.00px;font-size:15px;color:#000;font-weight:700;transform:scaleX(0.9571);">Margins Analysis</span>
<span style="left:1069.55px;top:183.00px;font-size:16px;color:#000;font-weight:700;transform:scaleX(0.9270);-webkit-text-stroke:0.25px #000;">Table</span>
<span style="left:1131.35px;top:183.00px;font-size:16px;color:#7a7a7a;transform:scaleX(0.9332);">Chart (Freq 0) - Left Aligned</span>
<span style="left:1354.36px;top:183.00px;font-size:16px;color:#7a7a7a;transform:scaleX(0.9240);">Chart (Freq 0) - Center Aligned</span>
<span style="left:1195.69px;top:220.00px;font-size:14.5px;color:#2f4a8a;font-weight:700;transform:scaleX(0.9338);">ps</span>
<span style="left:1243.31px;top:222.00px;font-size:16px;color:#000;transform:scaleX(0.9288);">Read Mode</span>
<span style="left:1375.60px;top:222.00px;font-size:16px;color:#000;transform:scaleX(0.9313);">Simple Pattern</span>
<span style="left:1539.94px;top:222.00px;font-size:16px;color:#000;transform:scaleX(0.9048);">Rising Clock Edge</span>
<span style="left:1065.78px;top:262.00px;font-size:16px;color:#000;transform:scaleX(0.9554);">Name</span>
<span style="left:1271.19px;top:262.00px;font-size:16px;color:#000;transform:scaleX(0.9460);">Left Margin (taps)</span>
<span style="left:1467.46px;top:262.00px;font-size:16px;color:#000;transform:scaleX(0.9213);">Center Point (taps)</span>
<span style="left:1669.89px;top:262.00px;font-size:16px;color:#000;transform:scaleX(0.9491);">Right Margin (taps)</span>
<div style="left:1057px;top:282px;width:810px;height:398px;overflow:hidden"><span style="left:29.04px;top:8.00px;font-size:16px;color:#000;transform:scaleX(0.9057);">Freq 0</span></div>
<div style="left:1057px;top:282px;width:810px;height:398px;overflow:hidden"><span style="left:48.82px;top:37.00px;font-size:16px;color:#000;transform:scaleX(0.9241);">Byte 0</span></div>
<div style="left:1057px;top:282px;width:810px;height:398px;overflow:hidden"><span style="left:69.04px;top:66.00px;font-size:16px;color:#000;transform:scaleX(0.9834);">Nibble 0</span></div>
<span style="left:1433.50px;top:348.00px;font-size:16px;color:#000;transform:scaleX(0.8771);">63</span>
<span style="left:1635.54px;top:348.00px;font-size:16px;color:#000;transform:scaleX(0.8771);">81</span>
<span style="left:1841.46px;top:348.00px;font-size:16px;color:#000;transform:scaleX(0.8771);">64</span>
<div style="left:1057px;top:282px;width:810px;height:398px;overflow:hidden"><span style="left:69.06px;top:95.00px;font-size:16px;color:#000;transform:scaleX(0.9685);">Nibble 1</span></div>
<span style="left:1433.74px;top:377.00px;font-size:16px;color:#000;transform:scaleX(0.8771);">61</span>
<span style="left:1635.54px;top:377.00px;font-size:16px;color:#000;transform:scaleX(0.8771);">79</span>
<span style="left:1841.74px;top:377.00px;font-size:16px;color:#000;transform:scaleX(0.8771);">62</span>
<div style="left:1057px;top:282px;width:810px;height:398px;overflow:hidden"><span style="left:48.84px;top:124.00px;font-size:16px;color:#000;transform:scaleX(0.9045);">Byte 1</span></div>
<div style="left:1057px;top:282px;width:810px;height:398px;overflow:hidden"><span style="left:69.04px;top:153.00px;font-size:16px;color:#000;transform:scaleX(0.9834);">Nibble 0</span></div>
<span style="left:1433.74px;top:435.00px;font-size:16px;color:#000;transform:scaleX(0.8771);">61</span>
<span style="left:1635.54px;top:435.00px;font-size:16px;color:#000;transform:scaleX(0.8771);">79</span>
<span style="left:1841.74px;top:435.00px;font-size:16px;color:#000;transform:scaleX(0.8771);">62</span>
<div style="left:1057px;top:282px;width:810px;height:398px;overflow:hidden"><span style="left:69.06px;top:182.00px;font-size:16px;color:#000;transform:scaleX(0.9685);">Nibble 1</span></div>
<span style="left:1433.46px;top:464.00px;font-size:16px;color:#000;transform:scaleX(0.8771);">64</span>
<span style="left:1635.54px;top:464.00px;font-size:16px;color:#000;transform:scaleX(0.8771);">82</span>
<span style="left:1841.60px;top:464.00px;font-size:16px;color:#000;transform:scaleX(0.8771);">65</span>
<div style="left:1057px;top:282px;width:810px;height:398px;overflow:hidden"><span style="left:48.81px;top:211.00px;font-size:16px;color:#000;transform:scaleX(0.9275);">Byte 2</span></div>
<div style="left:1057px;top:282px;width:810px;height:398px;overflow:hidden"><span style="left:69.04px;top:240.00px;font-size:16px;color:#000;transform:scaleX(0.9834);">Nibble 0</span></div>
<span style="left:1433.74px;top:522.00px;font-size:16px;color:#000;transform:scaleX(0.8771);">59</span>
<span style="left:1635.54px;top:522.00px;font-size:16px;color:#000;transform:scaleX(0.8771);">77</span>
<span style="left:1841.60px;top:522.00px;font-size:16px;color:#000;transform:scaleX(0.8771);">60</span>
<div style="left:1057px;top:282px;width:810px;height:398px;overflow:hidden"><span style="left:69.06px;top:269.00px;font-size:16px;color:#000;transform:scaleX(0.9685);">Nibble 1</span></div>
<span style="left:1433.74px;top:551.00px;font-size:16px;color:#000;transform:scaleX(0.8771);">59</span>
<span style="left:1635.54px;top:551.00px;font-size:16px;color:#000;transform:scaleX(0.8771);">77</span>
<span style="left:1841.60px;top:551.00px;font-size:16px;color:#000;transform:scaleX(0.8771);">60</span>
<div style="left:1057px;top:282px;width:810px;height:398px;overflow:hidden"><span style="left:48.82px;top:298.00px;font-size:16px;color:#000;transform:scaleX(0.9241);">Byte 3</span></div>
<div style="left:1057px;top:282px;width:810px;height:398px;overflow:hidden"><span style="left:69.04px;top:327.00px;font-size:16px;color:#000;transform:scaleX(0.9834);">Nibble 0</span></div>
<span style="left:1433.74px;top:609.00px;font-size:16px;color:#000;transform:scaleX(0.8771);">61</span>
<span style="left:1635.54px;top:609.00px;font-size:16px;color:#000;transform:scaleX(0.8771);">79</span>
<span style="left:1841.74px;top:609.00px;font-size:16px;color:#000;transform:scaleX(0.8771);">62</span>
<div style="left:1057px;top:282px;width:810px;height:398px;overflow:hidden"><span style="left:69.06px;top:356.00px;font-size:16px;color:#000;transform:scaleX(0.9685);">Nibble 1</span></div>
<span style="left:1433.74px;top:638.00px;font-size:16px;color:#000;transform:scaleX(0.8771);">61</span>
<span style="left:1635.54px;top:638.00px;font-size:16px;color:#000;transform:scaleX(0.8771);">79</span>
<span style="left:1841.74px;top:638.00px;font-size:16px;color:#000;transform:scaleX(0.8771);">62</span>
<div style="left:1057px;top:282px;width:810px;height:398px;overflow:hidden"><span style="left:48.81px;top:385.00px;font-size:16px;color:#000;transform:scaleX(0.9276);">Byte 4</span></div>
</div></body></html>
